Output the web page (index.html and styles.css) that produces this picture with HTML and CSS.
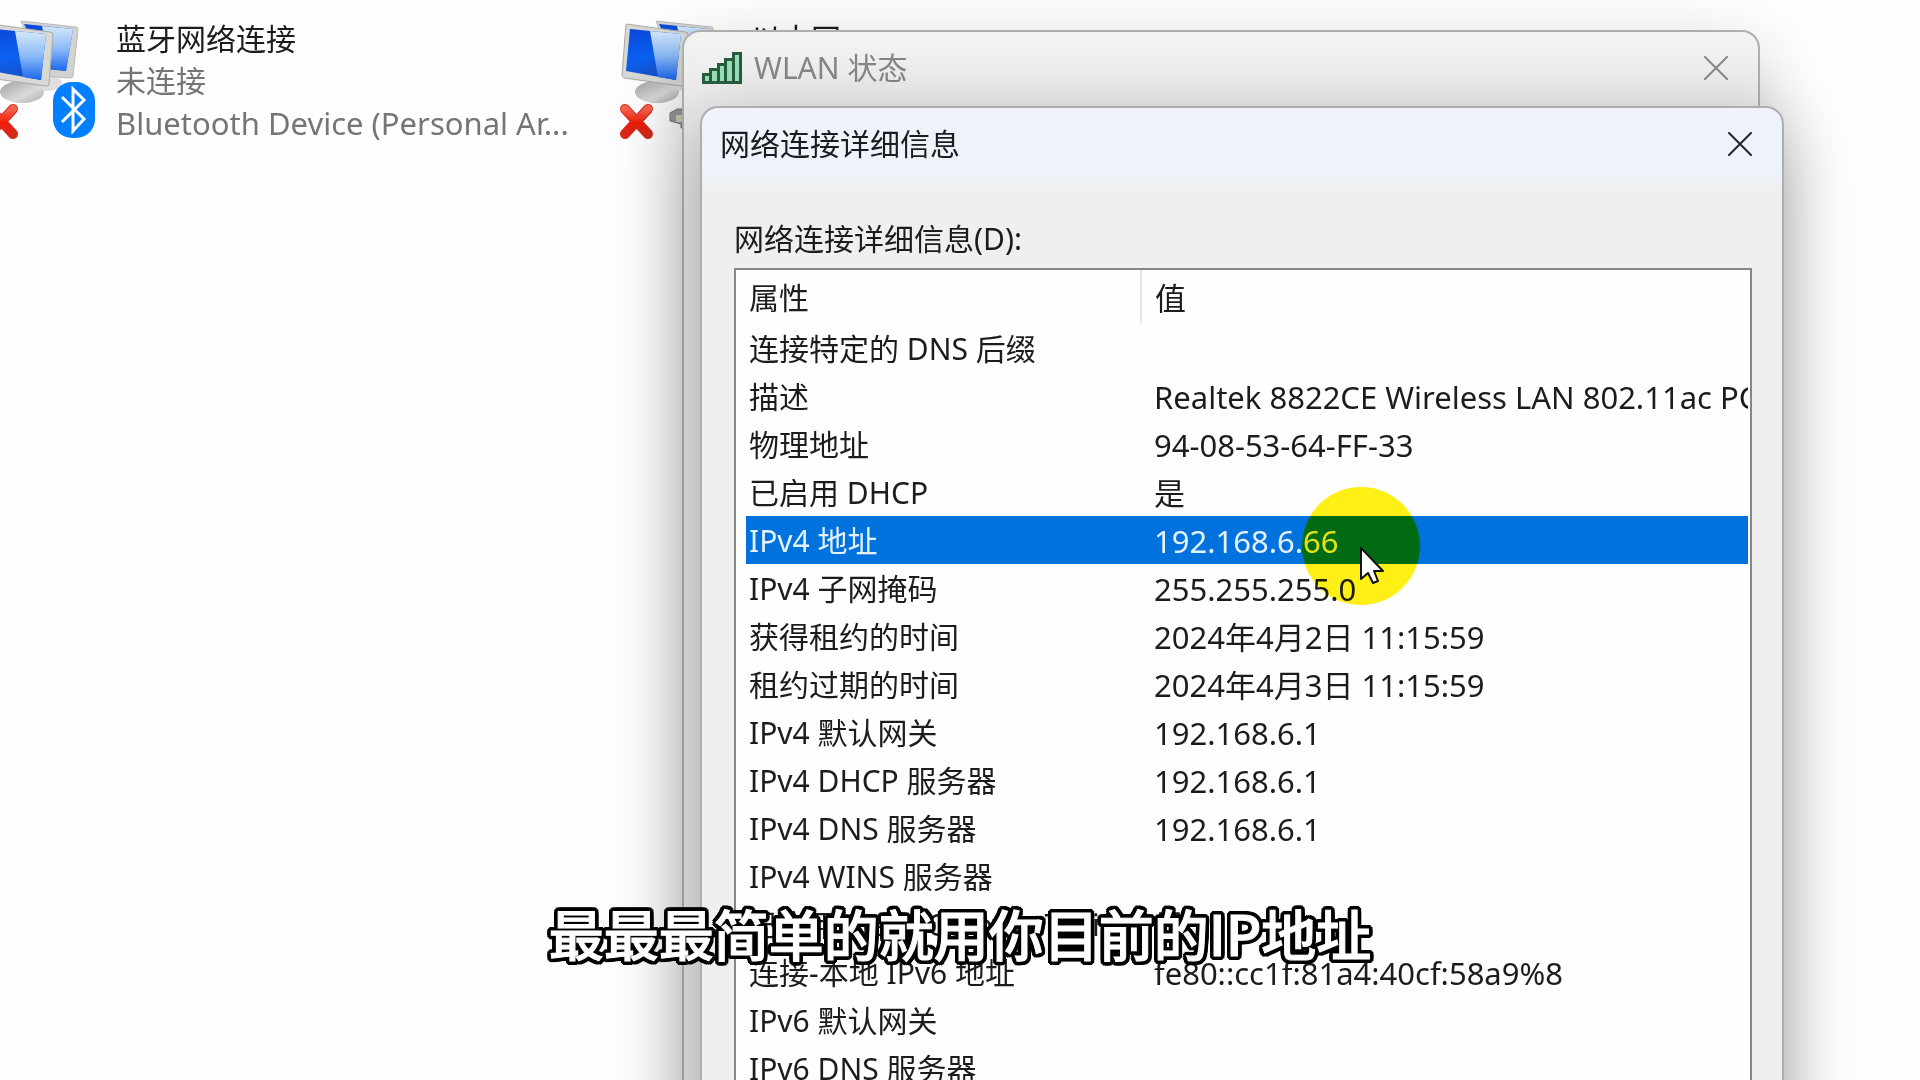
FILE: index.html
```html
<!DOCTYPE html>
<html lang="zh-CN">
<head>
  <meta charset="UTF-8">
  <meta name="viewport" content="width=device-width, initial-scale=1.0">
  <title>网络连接</title>
  <link rel="stylesheet" href="styles.css">
</head>
<body>
  <!-- shared icon shapes -->
  <svg class="defs" width="0" height="0" aria-hidden="true">
    <defs>
      <linearGradient id="screen" x1="0" y1="0" x2="0.3" y2="1">
        <stop offset="0" stop-color="#0a46d8"/>
        <stop offset="0.6" stop-color="#0b62f2"/>
        <stop offset="1" stop-color="#1650c8"/>
      </linearGradient>
      <linearGradient id="shine" x1="0" y1="0" x2="0" y2="1">
        <stop offset="0" stop-color="#d5e8fb"/>
        <stop offset="0.5" stop-color="#8dbcf8"/>
        <stop offset="1" stop-color="#1a66ee"/>
      </linearGradient>
      <linearGradient id="stand" x1="0" y1="0" x2="1" y2="1">
        <stop offset="0" stop-color="#a0a0a0"/>
        <stop offset="0.6" stop-color="#dadada"/>
        <stop offset="1" stop-color="#a8a8a8"/>
      </linearGradient>
      <linearGradient id="red" x1="0" y1="0" x2="0" y2="1">
        <stop offset="0" stop-color="#f4644f"/>
        <stop offset="0.55" stop-color="#ee1d08"/>
        <stop offset="1" stop-color="#d4281a"/>
      </linearGradient>
      <g id="monitors">
        <ellipse cx="62" cy="83" rx="16" ry="8" fill="#dedede"/>
        <path d="M37 21 L92 27 Q94 27 94 29 L89 76 Q89 78 86 78 L60 76 Z" fill="#d2d2cf" stroke="#b9b9b6"/>
        <path d="M40 24 L89 29 L82 71 L62 69 Z" fill="url(#screen)"/>
        <path d="M58 26 L89 29 L82 71 L68 69 Z" fill="url(#shine)"/>
        <ellipse cx="38" cy="92" rx="22" ry="11" fill="url(#stand)"/>
        <path d="M7 24 L66 32 Q69 32 69 35 L65 84 Q65 87 62 86 L5 78 Q3 77 3 75 Z" fill="#d8d8d5" stroke="#a8a8a5"/>
        <path d="M11 29 L62 34 L57 80 L7 71 Z" fill="url(#screen)"/>
        <path d="M31 31 L62 34 L57 80 L39 77 Z" fill="url(#shine)"/>
      </g>
      <g id="cross">
        <path d="M6 109 L29 134 M29 109 L6 134" stroke="#d92a1c" stroke-width="10" stroke-linecap="round"/>
        <path d="M6 109 L29 134 M29 109 L6 134" stroke="url(#red)" stroke-width="8" stroke-linecap="round"/>
      </g>
    </defs>
  </svg>

  <main class="desktop">
    <ul class="connections">
      <li class="connection">
        <svg class="connection-icon" viewBox="0 0 116 144" fill="none">
          <use href="#monitors"/>
          <use href="#cross"/>
          <rect x="69" y="82" width="42" height="56" rx="19" fill="#0080ff"/>
          <path d="M78 97 L100 119 L89 131 V89 L100 100 L78 122" stroke="#fff" stroke-width="3"/>
        </svg>
        <div class="connection-text">
          <p class="name">蓝牙网络连接</p>
          <p>未连接</p>
          <p class="device">Bluetooth Device (Personal Ar...</p>
        </div>
      </li>
      <li class="connection">
        <svg class="connection-icon" viewBox="0 0 116 144" fill="none">
          <use href="#monitors"/>
          <use href="#cross"/>
          <path d="M51 113 L58 109 H76 V128 H62 V124 L51 121 Z" fill="#999" stroke="#777"/>
          <path d="M57 115 H68 V122 H57 Z" fill="#ccc"/>
          <path d="M61 116 H65 V121 H61 Z" fill="#d8d27a"/>
        </svg>
        <div class="connection-text">
          <p class="name">以太网</p>
        </div>
      </li>
    </ul>

    <section class="window status-window">
      <header class="titlebar">
        <svg class="signal" viewBox="0 0 40 32">
          <path d="M1 31 V22 H8 V17 H16 V12 H23 V7 H31 V1 H39 V31 Z" fill="#285c40" stroke="#285c40" stroke-width="2"/>
          <path d="M3 24 H7 V29 H3 Z M10 19 H15 V29 H10 Z M18 14 H22 V29 H18 Z M25 9 H30 V29 H25 Z M33 3 H37 V29 H33 Z" fill="#98e0b4"/>
        </svg>
        <h2>WLAN 状态</h2>
        <button class="close" type="button" aria-label="关闭">
          <svg viewBox="0 0 24 24"><path d="M1 1 L23 23 M23 1 L1 23"/></svg>
        </button>
      </header>
    </section>

    <section class="window details-window">
      <header class="titlebar">
        <h2>网络连接详细信息</h2>
        <button class="close" type="button" aria-label="关闭">
          <svg viewBox="0 0 24 24"><path d="M1 1 L23 23 M23 1 L1 23"/></svg>
        </button>
      </header>
      <div class="details">
        <h3 id="details-label">网络连接详细信息(D):</h3>
        <div class="list">
          <table aria-labelledby="details-label">
            <thead>
              <tr><th>属性</th><th>值</th></tr>
            </thead>
            <tbody>
              <tr><td>连接特定的 DNS 后缀</td><td></td></tr>
              <tr><td>描述</td><td>Realtek 8822CE Wireless LAN 802.11ac PCI-E NIC</td></tr>
              <tr><td>物理地址</td><td>94-08-53-64-FF-33</td></tr>
              <tr><td>已启用 DHCP</td><td>是</td></tr>
              <tr class="selected"><td>IPv4 地址</td><td>192.168.6.66</td></tr>
              <tr><td>IPv4 子网掩码</td><td>255.255.255.0</td></tr>
              <tr><td>获得租约的时间</td><td>2024年4月2日 11:15:59</td></tr>
              <tr><td>租约过期的时间</td><td>2024年4月3日 11:15:59</td></tr>
              <tr><td>IPv4 默认网关</td><td>192.168.6.1</td></tr>
              <tr><td>IPv4 DHCP 服务器</td><td>192.168.6.1</td></tr>
              <tr><td>IPv4 DNS 服务器</td><td>192.168.6.1</td></tr>
              <tr><td>IPv4 WINS 服务器</td><td></td></tr>
              <tr><td>已启用 NetBIOS over Tcpip</td><td>是</td></tr>
              <tr><td>连接-本地 IPv6 地址</td><td>fe80::cc1f:81a4:40cf:58a9%8</td></tr>
              <tr><td>IPv6 默认网关</td><td></td></tr>
              <tr><td>IPv6 DNS 服务器</td><td></td></tr>
            </tbody>
          </table>
        </div>
      </div>
    </section>

    <div class="click-spot"></div>
    <svg class="cursor" viewBox="0 0 26 40">
      <path d="M2 2 V33 L9 27 L14 37 L19 35 L15 25 H24 Z" fill="#fff" stroke="#111" stroke-width="2" stroke-linejoin="round"/>
    </svg>

    <p class="subtitle">最最最简单的就用你目前的IP地址</p>
  </main>
</body>
</html>
```

FILE: styles.css
```css
* {
  margin: 0;
  padding: 0;
  box-sizing: border-box;
}

body {
  font-family: "Noto Sans", "Noto Sans CJK SC", sans-serif;
  font-size: 30px;
  line-height: 42px;
  color: #1c1c1c;
  background: #fff;
}

h2,
h3 {
  font-size: 30px;
  font-weight: 400;
}

.defs {
  position: absolute;
}

.desktop {
  position: relative;
  height: 100vh;
  overflow: hidden;
  background: #fefefe;
}

/* connection icons */
.connections {
  display: flex;
  list-style: none;
}

.connection {
  display: flex;
  flex: 0 0 635px;
  gap: 16px;
}

.connection-icon {
  flex: none;
  width: 116px;
  height: 144px;
  margin-left: -16px;
}

.connection-text {
  padding-top: 18px;
  color: #757575;
  white-space: nowrap;
}

.connection-text .name {
  color: #1c1c1c;
}

.connection-text .device {
  font-size: 31px;
}

/* windows */
.window {
  position: absolute;
  bottom: -120px;
  border: 2px solid #aeaeae;
  border-radius: 18px;
}

.status-window {
  top: 30px;
  left: 682px;
  right: 160px;
  box-shadow: 0 24px 72px rgba(0, 0, 0, 0.22);
  background: linear-gradient(#f3f3f3, #e9e9e9 80px);
  color: #868686;
}

.details-window {
  top: 106px;
  left: 700px;
  right: 136px;
  overflow: hidden;
  box-shadow: 0 24px 72px rgba(0, 0, 0, 0.32);
  background: linear-gradient(#f0f3f9, #edf2fb 24px, #edf2fb 64px, #efefef 84px);
}

.titlebar {
  display: flex;
  align-items: center;
  height: 72px;
  padding: 0 30px 0 18px;
}

.titlebar h2 {
  flex: 1;
}

.status-window .titlebar {
  gap: 12px;
}

.signal {
  width: 40px;
  height: 32px;
}

.close {
  width: 24px;
  height: 24px;
  border: none;
  background: none;
}

.close svg {
  display: block;
  stroke: #20262e;
  stroke-width: 2;
  stroke-linecap: round;
}

.status-window .close svg {
  stroke: #888;
}

/* property list */
.details {
  padding: 38px 30px 0 32px;
}

.list {
  height: 1200px;
  margin-top: 8px;
  padding: 0 2px 0 10px;
  border: 2px solid #85858b;
  background: #fefefe;
  overflow: hidden;
}

.details table {
  width: 100%;
  table-layout: fixed;
  border-collapse: collapse;
}

.details th,
.details td {
  height: 48px;
  padding: 2px 0 0 3px;
  font-weight: 400;
  text-align: left;
  white-space: nowrap;
  overflow: hidden;
}

.details th {
  height: 54px;
}

.details th:first-child {
  width: 395px;
  border-right: 2px solid #e6e6e6;
}

.details th:last-child,
.details td:last-child {
  padding-left: 13px;
  font-size: 31px;
}

.selected {
  background: #0072de;
  color: #e4f1ff;
}

/* click highlight and pointer */
.click-spot {
  position: absolute;
  top: 487px;
  left: 1302px;
  width: 118px;
  height: 118px;
  border-radius: 50%;
  background: #fff014;
  mix-blend-mode: multiply;
}

.cursor {
  position: absolute;
  top: 546px;
  left: 1359px;
  width: 26px;
  height: 40px;
}

.subtitle {
  position: absolute;
  right: 0;
  bottom: 108px;
  left: 0;
  font-family: "Noto Sans CJK SC", sans-serif;
  font-size: 55px;
  font-weight: 500;
  line-height: 80px;
  text-align: center;
  color: #fff;
  -webkit-text-stroke: 1px #fff;
  text-shadow:
    4px 0 #000, -4px 0 #000, 0 4px #000, 0 -4px #000,
    3px 3px #000, -3px 3px #000, 3px -3px #000, -3px -3px #000,
    4px 2px #000, -4px 2px #000, 4px -2px #000, -4px -2px #000,
    2px 4px #000, -2px 4px #000, 2px -4px #000, -2px -4px #000,
    2px 0 #000, -2px 0 #000, 0 2px #000, 0 -2px #000;
}
```
